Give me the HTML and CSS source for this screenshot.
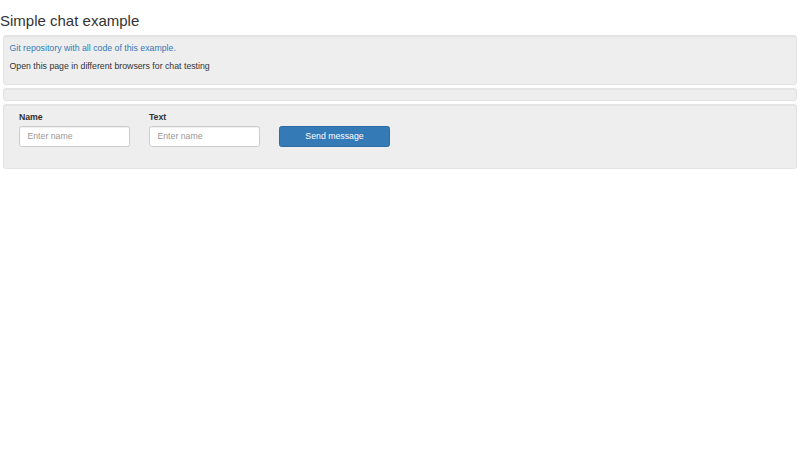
FILE: index.html
```html
<!DOCTYPE html>
<html>
<head>
<meta charset="utf-8">
<title>Simple chat example</title>
<link rel="stylesheet" href="styles.css">
</head>
<body>
<h3 class="title">Simple chat example</h3>
<div class="well">
  <p class="para"><a class="link" href="#">Git repository with all code of this example.</a></p>
  <p class="para para-last">Open this page in different browsers for chat testing</p>
</div>
<div class="well"></div>
<div class="well">
  <form class="form-row">
    <div class="col">
      <label class="label">Name</label>
      <input class="input" type="text" placeholder="Enter name">
    </div>
    <div class="col">
      <label class="label">Text</label>
      <input class="input" type="text" placeholder="Enter name">
    </div>
    <div class="col">
      <label class="label">&nbsp;</label>
      <button class="btn" type="button">Send message</button>
    </div>
  </form>
</div>
</body>
</html>
```
FILE: styles.css
```css
* { box-sizing: border-box; }
html, body {
  margin: 0;
  padding: 0;
  background: #fff;
  font-family: "Liberation Sans", Arial, Helvetica, sans-serif;
  font-size: 8.75px;
  line-height: 1.42857;
  color: #333;
}
.title {
  margin: 12.5px 0 6px 0;
  font-size: 15px;
  font-weight: 500;
  line-height: 1.1;
  color: #333;
}
.well {
  margin: 0 3px 3px 3px;
  min-height: 12px;
  padding: 5.5px;
  background: #eeeeee;
  border: 1px solid #e3e3e3;
  border-radius: 2.5px;
  box-shadow: inset 0 1px 1px rgba(0,0,0,0.05);
}
.para {
  margin: 0 0 6.25px 0;
}
.para-last {
  margin-bottom: 6px;
}
.link {
  color: #337ab7;
  text-decoration: none;
}
.form-row {
  display: flex;
  margin: 0 0 15.5px 0;
}
.col {
  width: 130px;
  padding: 0 9.4px;
  display: flex;
  flex-direction: column;
}
.label {
  display: block;
  font-weight: bold;
  margin-bottom: 2.5px;
  line-height: 12.5px;
  color: #333;
}
.input {
  display: block;
  width: 100%;
  height: 21.25px;
  padding: 3.75px 7.5px;
  font-family: inherit;
  font-size: 8.75px;
  color: #555;
  background: #fff;
  border: 1px solid #ccc;
  border-radius: 2.5px;
  box-shadow: inset 0 1px 1px rgba(0,0,0,0.075);
  outline: none;
}
.input::placeholder { color: #999; }
.btn {
  display: block;
  width: 100%;
  height: 21.25px;
  padding: 0 7.5px;
  font-family: inherit;
  font-size: 8.75px;
  color: #fff;
  background: #337ab7;
  border: 1px solid #2e6da4;
  border-radius: 2.5px;
  cursor: pointer;
}
```
